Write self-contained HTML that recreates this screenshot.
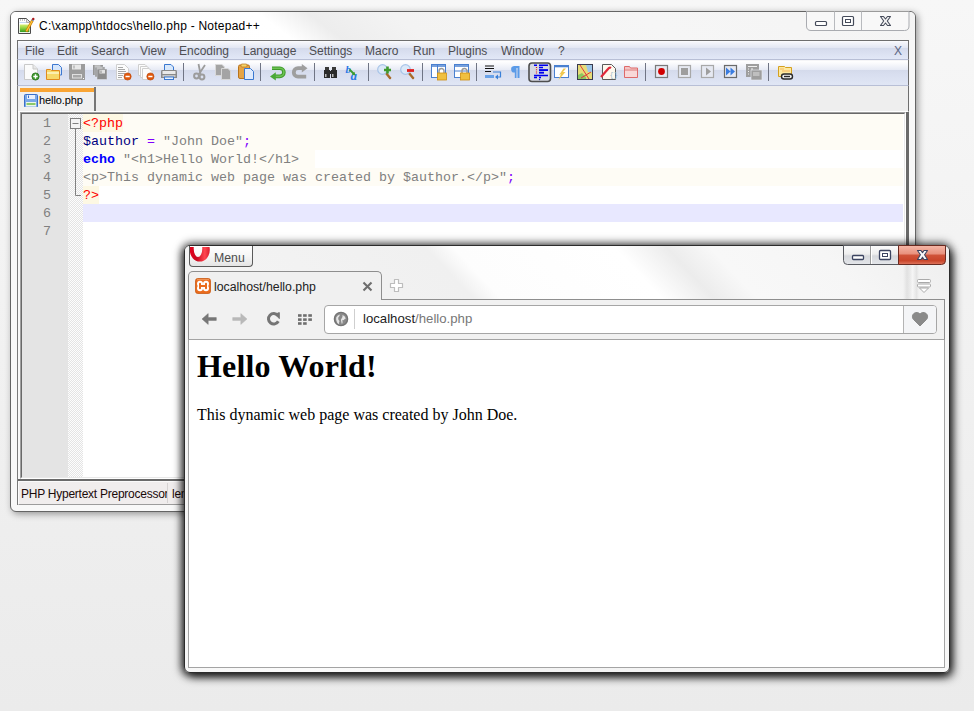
<!DOCTYPE html>
<html><head><meta charset="utf-8">
<style>
*{margin:0;padding:0;box-sizing:border-box}
html,body{width:974px;height:711px;overflow:hidden}
body{position:relative;background:linear-gradient(180deg,#f7f7f7 0%,#f1f1f1 50%,#ebebeb 100%);font-family:"Liberation Sans",sans-serif}
.a{position:absolute}
#npp{left:10px;top:11px;width:906px;height:501px;border:1px solid #646464;border-radius:6px;
 background:#f8f8f8;
 box-shadow:2px 2px 7px rgba(0,0,0,.38)}
.ttl{font-size:12px;color:#000;white-space:nowrap}
.menubar{border-top:1px solid #6e6e6e;border-left:1px solid #6e6e6e;border-right:1px solid #6e6e6e;background:linear-gradient(180deg,#fdfdfe 0px,#f4f5fa 1.5px,#e2e6f2 7px,#d4daeb 7px,#d8deef 10px,#e2e8f7 18px);border-bottom:1px solid #b8bfd6}
.menubar span{position:absolute;top:3px;font-size:12px;color:#4e4e52;white-space:nowrap}
.toolbar{border-left:1px solid #6e6e6e;border-right:1px solid #6e6e6e;background:linear-gradient(180deg,#f5f5f7 0px,#f5f5f7 1px,#ffffff 1px,#fbfbfd 3px,#e6eaf5 10px,#d4daeb 10px,#d8deef 14px,#e0e6f5 25px);border-bottom:1px solid #b8bfd6}
.tabbar{border-left:1px solid #6e6e6e;border-right:1px solid #6e6e6e;background:#eeeeee;border-bottom:1px solid #fff}
.code{font-family:"Liberation Mono",monospace;font-size:13.333px;line-height:18px;white-space:pre}
#op{left:184px;top:245px;width:766px;height:428px;border:1px solid #2c2c2c;border-radius:6px;
 background:linear-gradient(110deg,#f2f2f2 0%,#fbfbfb 30%,#f3f3f3 55%,#f7f7f7 100%);
 box-shadow:3px 4px 10px rgba(0,0,0,.8),-3px 2px 8px rgba(0,0,0,.6),0 -3px 8px rgba(0,0,0,.4)}
</style></head><body>
<!-- Notepad++ -->
<div id="npp" class="a"></div>
<div class="a" style="left:11px;top:12px;width:904px;height:28px;border-radius:5px 5px 0 0;background:linear-gradient(37deg,#fdfdfd 0px,#ffffff 170px,#ededed 200px,#f3f3f3 250px,#f6f6f6 400px,#f4f4f4 567px)"></div>
<div class="a ttl" style="left:39px;top:19px;letter-spacing:0.24px">C:\xampp\htdocs\hello.php - Notepad++</div>
<!-- menubar -->
<div class="a menubar" style="left:17px;top:40px;width:892px;height:20px">
  <span style="left:7px">File</span><span style="left:39px">Edit</span><span style="left:73px">Search</span><span style="left:122px">View</span><span style="left:161px">Encoding</span><span style="left:225px">Language</span><span style="left:291px">Settings</span><span style="left:347px">Macro</span><span style="left:395px">Run</span><span style="left:430px">Plugins</span><span style="left:483px">Window</span><span style="left:540px">?</span><span style="left:876px;color:#5b6582">X</span>
</div>
<div class="a toolbar" style="left:17px;top:60px;width:892px;height:26px"></div>
<div class="a tabbar" style="left:17px;top:86px;width:892px;height:26px"></div>
<!-- tab -->
<div class="a" style="left:19px;top:87px;width:77px;height:24px;background:#f0f0f0;border-right:2px solid #767676"></div>
<div class="a" style="left:20px;top:88px;width:74px;height:4px;background:#f9a535"></div>
<svg class="a" style="left:24px;top:94px" width="14" height="13" viewBox="0 0 14 13" preserveAspectRatio="none">
 <rect x="0.5" y="0.5" width="13" height="13" rx="1" fill="#7aa8e8" stroke="#3a6fc8"/>
 <rect x="3" y="1" width="8" height="4" fill="#e8f0fc"/>
 <rect x="4" y="1.5" width="1" height="2.5" fill="#3a6fc8"/>
 <rect x="2" y="8" width="10" height="4.5" fill="#eef6e8"/>
 <rect x="2.5" y="9" width="9" height="2" fill="#8ac86a"/>
</svg>
<div class="a" style="left:39px;top:94px;font-size:11px;color:#000;letter-spacing:-0.1px;white-space:nowrap">hello.php</div>
<!-- editor frame -->
<div class="a" style="left:20px;top:112px;width:886px;height:367px;border-top:1px solid #a0a0a0;border-left:1px solid #a0a0a0;border-right:1px solid #fff;border-bottom:1px solid #fff"></div>
<div class="a" style="left:21px;top:113px;width:884px;height:365px;border-top:1px solid #696969;border-left:1px solid #696969;border-right:1px solid #e8e8e8;border-bottom:1px solid #e8e8e8;background:#fff"></div>
<div class="a" style="left:906px;top:112px;width:3px;height:369px;background:#6a6a6a"></div>
<div class="a" style="left:17px;top:479px;width:892px;height:2px;background:#6a6a6a"></div>
<div class="a" style="left:17px;top:86px;width:1px;height:419px;background:#7a7a7a"></div>
<!-- line number margin -->
<div class="a" style="left:22px;top:114px;width:46px;height:363px;background:#e4e4e4"></div>
<div class="a" style="left:68px;top:114px;width:15px;height:363px;background:repeating-conic-gradient(#e4e4e4 0 25%,#fdfdfd 0 50%) 0 0/2px 2px"></div>
<!-- line backgrounds -->
<div class="a" style="left:83px;top:114px;width:40px;height:18px;background:#fdf8e3"></div>
<div class="a" style="left:123px;top:114px;width:780px;height:18px;background:#fefcf5"></div>
<div class="a" style="left:83px;top:132px;width:820px;height:36px;background:#fefcf5"></div>
<div class="a" style="left:83px;top:150px;width:232px;height:18px;background:#fefcf5"></div>
<div class="a" style="left:315px;top:150px;width:588px;height:18px;background:#fff"></div>
<div class="a" style="left:83px;top:168px;width:820px;height:18px;background:#fefcf5"></div>
<div class="a" style="left:83px;top:186px;width:16px;height:18px;background:#fdf8e3"></div>
<div class="a" style="left:83px;top:204px;width:820px;height:18px;background:#e8e8ff"></div>
<!-- line numbers -->
<div class="a code" style="left:27px;top:115px;width:24px;text-align:right;color:#808080">1
2
3
4
5
6
7</div>
<!-- fold marks -->
<svg class="a" style="left:68px;top:114px" width="15" height="100" viewBox="0 0 15 100">
 <rect x="2.5" y="4.5" width="10" height="10" fill="#f4f4f4" stroke="#808080"/>
 <path d="M4.5 9.5 H10.5" stroke="#808080"/>
 <path d="M7.5 15 V81.5 H13" fill="none" stroke="#808080"/>
</svg>
<!-- code -->
<div class="a code" style="left:83px;top:115px"><span style="color:#f00">&lt;?php</span>
<span style="color:#000080">$author</span> <span style="color:#8000ff">=</span> <span style="color:#808080">"John Doe"</span><span style="color:#8000ff">;</span>
<span style="color:#00f;font-weight:bold">echo</span> <span style="color:#808080">"&lt;h1&gt;Hello World!&lt;/h1&gt;</span>
<span style="color:#808080">&lt;p&gt;This dynamic web page was created by $author.&lt;/p&gt;"</span><span style="color:#8000ff">;</span>
<span style="color:#f00">?&gt;</span></div>
<!-- status bar -->
<div class="a" style="left:18px;top:481px;width:891px;height:24px;background:#f0eded;border-top:1px solid #fafafa;border-left:1px solid #fcfcfc;border-bottom:1px solid #9c9c9c"></div>
<div class="a" style="left:167px;top:483px;width:1px;height:20px;background:#d6d3d3"></div>
<div class="a" style="left:21px;top:487px;width:146px;overflow:hidden;font-size:12px;letter-spacing:-0.25px;color:#1a0a0a;white-space:nowrap">PHP Hypertext Preprocessor</div>
<div class="a" style="left:172px;top:487px;font-size:12px;letter-spacing:-0.25px;color:#1a0a0a;white-space:nowrap">length : 117</div>
<svg class="a" style="left:0;top:0" width="974" height="711" viewBox="0 0 974 711" shape-rendering="geometricPrecision">
<!-- title icon notepad -->
<defs><linearGradient id="ng" x1="0" y1="0" x2="0" y2="1"><stop offset="0" stop-color="#d8f070"/><stop offset="0.5" stop-color="#8ad040"/><stop offset="1" stop-color="#2e9a1e"/></linearGradient></defs>
<g transform="translate(18,18)">
 <path d="M0.5 0.5 H8.5 L12.5 4.5 V15.5 H0.5 Z" fill="#fff" stroke="#4a4a4a"/>
 <path d="M8.5 0.8 V4.5 H12.2" fill="#e4e4e4" stroke="#9a9a9a" stroke-width="0.8"/>
 <path d="M2 2 h1 M4 2 h1 M6 2 h1" stroke="#8a8a8a" stroke-width="1"/>
 <path d="M1.5 4.5 H8" stroke="#b8d0f0" stroke-width="0.8"/>
 <rect x="1.8" y="6.5" width="9.6" height="7.6" fill="url(#ng)"/>
 <path d="M8.3 13.6 L14.6 2.2" stroke="#c87800" stroke-width="2.6"/>
 <path d="M8.5 13.1 L14.4 2.5" stroke="#ffc83a" stroke-width="1.2"/>
 <path d="M14.3 2.6 L15.2 1" stroke="#6080c0" stroke-width="2.2"/>
 <circle cx="15.3" cy="0.9" r="1.2" fill="#b01818"/>
</g>
<!-- npp window buttons -->
<g>
 <path d="M806.5 11 V26 Q806.5 30.5 811 30.5 H904.5 Q909 30.5 909 26 V11" fill="rgba(255,255,255,0.35)" stroke="#a9abb0" stroke-width="1"/>
 <path d="M834.5 11.5 V30 M861.5 11.5 V30" stroke="#b8babe" stroke-width="1"/>
 <rect x="815.5" y="21.5" width="11" height="4" rx="1" fill="#fff" stroke="#454b5a" stroke-width="1.2"/>
 <rect x="842.5" y="16.5" width="11" height="9" rx="1" fill="#fff" stroke="#454b5a" stroke-width="1.2"/>
 <rect x="845.5" y="19.5" width="5" height="3" fill="#fff" stroke="#454b5a" stroke-width="1"/>
 <path d="M880.5 16.5 L883.5 16.5 L885.5 19 L887.5 16.5 L890.5 16.5 L887.3 21 L890.5 25.5 L887.5 25.5 L885.5 23 L883.5 25.5 L880.5 25.5 L883.7 21 Z" fill="#f4f4f4" stroke="#454b5a" stroke-width="1.1" stroke-linejoin="round"/>
</g>
<!-- toolbar separators -->
<g stroke="#6f7484" stroke-width="1">
 <path d="M183.5 63 V81 M260.5 63 V81 M314.5 63 V81 M368.5 63 V81 M422.5 63 V81 M476.5 63 V81 M645.5 63 V81 M768.5 63 V81"/>
</g>
<!-- 1 new -->
<g transform="translate(24,64)">
 <path d="M0.5 0.5 H9 L13.5 5 V15.5 H0.5 Z" fill="#fbfbfb" stroke="#c9c9c9"/>
 <path d="M9 0.5 V5 H13.5" fill="#e8e8e8" stroke="#c9c9c9"/>
 <circle cx="11.5" cy="12.5" r="3.6" fill="#3e9b2c" stroke="#2a6f1c" stroke-width="0.8"/>
 <path d="M11.5 10.3 V14.7 M9.3 12.5 H13.7" stroke="#fff" stroke-width="1.4"/>
</g>
<!-- 2 open -->
<g transform="translate(46,64)">
 <path d="M6.5 0.5 H12.5 L15.5 3.5 V11 H6.5 Z" fill="#d6e6fb" stroke="#3d78d0"/>
 <path d="M0.5 5.5 H4.5 L5.5 6.5 H13.5 V15.5 H0.5 Z" fill="#f6d86a" stroke="#e08a1e"/>
 <path d="M1 9 H13" stroke="#fbeeb0" stroke-width="2"/>
</g>
<!-- 3 save -->
<g transform="translate(69,64)">
 <path d="M0 0 H16 V16 H1 L0 15 Z" fill="#9c9c9c"/>
 <rect x="3" y="0.5" width="9" height="5" fill="#e8e8e8"/>
 <rect x="4.5" y="1.5" width="1" height="3" fill="#9c9c9c"/>
 <rect x="3" y="10" width="10" height="4.5" fill="#e0e0e0"/>
 <rect x="4" y="11" width="8" height="2.5" fill="#a8a8a8"/>
 <rect x="14" y="14" width="1" height="1" fill="#fff"/>
</g>
<!-- 4 save all -->
<g transform="translate(92,64)">
 <rect x="1" y="1" width="10" height="10" fill="#959595"/>
 <rect x="3" y="3" width="10" height="10" fill="#8f8f8f" stroke="#e4e7ef" stroke-width="0.5"/>
 <rect x="5" y="5" width="10" height="10.5" fill="#8c8c8c" stroke="#e4e7ef" stroke-width="0.5"/>
 <path d="M2.5 2 H8.5 M4.5 4 H10.5" stroke="#e6e6e6" stroke-width="0.9"/>
 <rect x="7.5" y="6" width="5.5" height="3.5" fill="#e2e2e2"/>
 <rect x="8.5" y="6.5" width="1" height="2.5" fill="#8c8c8c"/>
</g>
<!-- 5 close -->
<g transform="translate(116,64)">
 <path d="M0.5 0.5 H8.5 L12.5 4.5 V15.5 H0.5 Z" fill="#fcfcfc" stroke="#cfcfcf"/>
 <path d="M2 3.5 H7 M2 5.5 H9 M2 7.5 H10 M2 9.5 H9 M2 11.5 H7 M2 13.5 H6" stroke="#a8a8a8" stroke-width="1" shape-rendering="crispEdges"/>
 <circle cx="11.6" cy="12.5" r="3.6" fill="#e0580c" stroke="#b8440a" stroke-width="0.6"/>
 <path d="M9.5 12.5 H13.7" stroke="#fff" stroke-width="1.5"/>
</g>
<!-- 6 close all -->
<g transform="translate(138,64)">
 <path d="M0.5 0.5 H7 L10 3.5 V11.5 H0.5 Z" fill="#fcfcfc" stroke="#cfcfcf"/>
 <path d="M2.5 2.5 H9 L12 5.5 V13.5 H2.5 Z" fill="#fcfcfc" stroke="#cfcfcf"/>
 <path d="M4.5 4.5 H11 L14 7.5 V15.5 H4.5 Z" fill="#fcfcfc" stroke="#cfcfcf"/>
 <circle cx="12.4" cy="12.5" r="3.6" fill="#e0580c" stroke="#b8440a" stroke-width="0.6"/>
 <path d="M10.3 12.5 H14.5" stroke="#fff" stroke-width="1.5"/>
</g>
<!-- 7 print -->
<g transform="translate(161,64)">
 <path d="M3.5 0.5 H10 L12.5 3 V7 H3.5 Z" fill="#d8e8fb" stroke="#3a78d0"/>
 <path d="M1 6 H15 Q16 6 16 8 V14 H0 V8 Q0 6 1 6 Z" fill="#8a8a8a"/>
 <rect x="1.5" y="7" width="13" height="3" fill="#e9e9e9"/>
 <rect x="1.5" y="11" width="13" height="2" fill="#c5c5c5"/>
 <rect x="3.5" y="13" width="9" height="2.5" fill="#eaf2fc" stroke="#3a78d0"/>
</g>
<!-- 9 cut -->
<g transform="translate(193,64)" fill="none" stroke="#9c9c9c">
 <path d="M5.5 0 L7.5 10 M12 1 L6 10" stroke-width="1.8"/>
 <circle cx="3.5" cy="12" r="2.4" stroke-width="2"/>
 <circle cx="9" cy="13" r="2.4" stroke-width="2"/>
</g>
<!-- 10 copy -->
<g transform="translate(215,64)">
 <path d="M0.5 0.5 H7 L9.5 3 V11.5 H0.5 Z" fill="#a4a4a4" stroke="#d8d8d8"/>
 <path d="M6.5 4.5 H13 L15.5 7 V15.5 H6.5 Z" fill="#a4a4a4" stroke="#d8d8d8"/>
</g>
<!-- 11 paste -->
<g transform="translate(238,64)">
 <rect x="0.5" y="1" width="11" height="13.5" rx="1.5" fill="#e6a445" stroke="#b8731c"/>
 <rect x="3" y="0" width="6" height="3" rx="1" fill="#f5d46a" stroke="#b8731c" stroke-width="0.7"/>
 <path d="M6.5 4.5 H12.5 L15.5 7.5 V15.5 H6.5 Z" fill="#dfeafc" stroke="#3a78d0"/>
</g>
<!-- 13 undo -->
<g transform="translate(270,64)">
 <path d="M2 4.2 H9.8 A4.1 4.1 0 0 1 9.8 12.4 H4.5" fill="none" stroke="#3f9a2a" stroke-width="3.6"/>
 <path d="M2 4.2 H9.8 A4.1 4.1 0 0 1 9.8 12.4 H4.5" fill="none" stroke="#6cc254" stroke-width="1.6"/>
 <path d="M0 12.4 L5.8 8.2 V16.4 Z" fill="#4aa836"/>
</g>
<!-- 14 redo -->
<g transform="translate(292,64)">
 <path d="M14.2 12.6 H6 A4.2 4.2 0 0 1 6 4.2 H10.5" fill="none" stroke="#9e9e9e" stroke-width="3.8"/>
 <path d="M15.5 4.2 L9.8 0 V8.4 Z" fill="#9e9e9e"/>
</g>
<!-- 16 find -->
<g transform="translate(324,65)">
 <rect x="1" y="2" width="4" height="4" fill="#3a3a3a"/>
 <rect x="8" y="2" width="4" height="4" fill="#3a3a3a"/>
 <rect x="0" y="5" width="6" height="8" fill="#2b2b2b"/>
 <rect x="7" y="5" width="6" height="8" fill="#2b2b2b"/>
 <rect x="5" y="6" width="3" height="3" fill="#2b2b2b"/>
 <rect x="1" y="9" width="1.5" height="3" fill="#bbb"/>
 <rect x="8" y="9" width="1.5" height="3" fill="#bbb"/>
</g>
<!-- 17 replace -->
<g transform="translate(346,64)">
 <text x="-0.5" y="8.5" font-family="Liberation Serif" font-style="italic" font-weight="bold" font-size="11" fill="#2a78e4">b</text>
 <text x="4.5" y="16" font-family="Liberation Serif" font-style="italic" font-weight="bold" font-size="13" fill="#2a78e4">a</text>
 <path d="M3.5 5.5 L8 10" stroke="#3b9a2e" stroke-width="1.8"/>
 <path d="M9.5 11.5 L5.8 10.4 L8.4 7.8 Z" fill="#3b9a2e"/>
</g>
<!-- 19 zoom in -->
<g transform="translate(377,64)">
 <path d="M9 9 L13 14" stroke="#a86a2a" stroke-width="2.4" stroke-linecap="round"/>
 <circle cx="5.5" cy="5.5" r="4.8" fill="#dbe8f8" stroke="#a8c4e8" stroke-width="1.2"/>
 <path d="M10.5 2.5 V9.5 M7 6 H14" stroke="#3f9a2e" stroke-width="2.6"/>
</g>
<!-- 20 zoom out -->
<g transform="translate(400,64)">
 <path d="M9 9 L13 14" stroke="#a86a2a" stroke-width="2.4" stroke-linecap="round"/>
 <circle cx="5.5" cy="5.5" r="4.8" fill="#dbe8f8" stroke="#a8c4e8" stroke-width="1.2"/>
 <path d="M7 6.5 H14" stroke="#e02020" stroke-width="2.8"/>
</g>
<!-- 22 sync v -->
<g transform="translate(431,64)">
 <rect x="0.5" y="0.5" width="14" height="13" fill="#fff" stroke="#4a80d0"/>
 <path d="M0.5 2 H14.5" stroke="#4a80d0" stroke-width="1.5"/>
 <path d="M6.5 1 V13" stroke="#4a80d0"/>
 <path d="M8 9 V7 A2.5 2.5 0 0 1 13 7 V9" fill="none" stroke="#9a9a9a" stroke-width="1.5"/>
 <rect x="6.5" y="9" width="9" height="7" fill="#f0c040" stroke="#d09010" stroke-width="0.8"/>
</g>
<!-- 23 sync h -->
<g transform="translate(454,64)">
 <rect x="0.5" y="0.5" width="14" height="13" fill="#fff" stroke="#4a80d0"/>
 <path d="M0.5 2 H14.5" stroke="#4a80d0" stroke-width="1.5"/>
 <path d="M1 7 H14" stroke="#4a80d0"/>
 <path d="M8 9 V7 A2.5 2.5 0 0 1 13 7 V9" fill="none" stroke="#9a9a9a" stroke-width="1.5"/>
 <rect x="6.5" y="9" width="9" height="7" fill="#f0c040" stroke="#d09010" stroke-width="0.8"/>
</g>
<!-- 25 word wrap -->
<g transform="translate(485,64)">
 <path d="M0 2 H9 M0 4.5 H9 M0 7.5 H6" stroke="#111" stroke-width="1.2"/>
 <path d="M8 8 H15.5 V13 H12" fill="none" stroke="#3a80d8" stroke-width="1.2"/>
 <path d="M10 13 L13 10.5 V15.5 Z" fill="#3a80d8"/>
 <rect x="0" y="11" width="9" height="3" fill="#6aa2e8"/>
</g>
<!-- 26 pilcrow -->
<g transform="translate(511,66)">
 <path d="M3 0 H8.5 V12 H6.5 V2 H5.5 V12 H3.8 V6.5 A3.2 3.2 0 0 1 3 0 Z" fill="#5b9be8"/>
</g>
<!-- 27 pressed indent guide -->
<g>
 <rect x="529" y="63" width="21.5" height="18.5" rx="3" fill="#d6d9e2" stroke="#4e4e4e" stroke-width="1.6"/>
 <path d="M534 65.3 H537 M539 65.3 H548 M539 67.5 H543 M539 70 H548 M539 72.5 H544 M534 75.5 H548 M534 77.5 H537 M539 77.5 H541" stroke="#0000ee" stroke-width="1.4"/>
 <path d="M539 69.5 H548 V71 H539Z M539 72 H544 V73.5 H539Z" fill="#0000ee"/>
 <path d="M536.5 67 V74" stroke="#e02020" stroke-width="1.2" stroke-dasharray="1 1.2"/>
 <circle cx="539.5" cy="79.5" r="0.7" fill="#0000ee"/>
</g>
<!-- 28 UDL -->
<g transform="translate(554,65)">
 <rect x="0.5" y="0.5" width="14" height="12" fill="#fff" stroke="#4a80d0"/>
 <path d="M0.5 1.6 H14.5" stroke="#4a80d0" stroke-width="1.4"/>
 <path d="M5 10 L9.5 3.5 H12 L9 7 H11.5 L4.5 15 L7 9 Z" fill="#f0c850"/>
</g>
<!-- 29 doc map -->
<g transform="translate(577,64)">
 <rect x="0.5" y="0.5" width="15" height="15" fill="#e6dc78" stroke="#3a3a50"/>
 <path d="M9 1 H15 V8 H11 Z" fill="#9ec6e8"/>
 <path d="M1 11 L5 9 L9 13 L9 15 H1 Z" fill="#8cc860"/>
 <path d="M3 1 L12 15 M4 14 L14 8" stroke="#e03a3a" stroke-width="1"/>
</g>
<!-- 30 function list -->
<g transform="translate(601,64)">
 <path d="M1.5 0.5 H10.5 L14.5 4.5 V15.5 H1.5 Z" fill="#fdf8ee" stroke="#5a5a5a" stroke-width="1"/>
 <path d="M0 13 L7 5 Q8.5 3 10 4" stroke="#e0283a" stroke-width="2.2" fill="none"/>
 <text x="8.5" y="13" font-family="Liberation Mono" font-size="7" fill="#9bb8c8">{}</text>
</g>
<!-- 31 folder workspace -->
<g transform="translate(624,66)">
 <path d="M0.5 0.5 H5.5 L6.5 2 H13.5 V11.5 H0.5 Z" fill="#f4c4c4" stroke="#de6a6a"/>
 <path d="M1 4 H13" stroke="#e08a8a" stroke-width="1"/>
 <rect x="1" y="5" width="12" height="6" fill="#f8d8d8"/>
</g>
<!-- 33 record -->
<g transform="translate(655,65)">
 <rect x="0.5" y="0.5" width="12" height="12" fill="#e6e9f2" stroke="#7a7a7a" stroke-width="1.2"/>
 <circle cx="6.5" cy="6.5" r="3.4" fill="#d00000"/>
</g>
<!-- 34 stop -->
<g transform="translate(678,65)">
 <rect x="0.5" y="0.5" width="12" height="12" fill="#e6e9f2" stroke="#a8a8a8" stroke-width="1.2"/>
 <rect x="3" y="3" width="7" height="7" fill="#9e9e9e"/>
</g>
<!-- 35 play -->
<g transform="translate(701,65)">
 <rect x="0.5" y="0.5" width="12" height="12" fill="#e6e9f2" stroke="#a8a8a8" stroke-width="1.2"/>
 <path d="M5 2.5 L10 6.5 L5 10.5 Z" fill="#9e9e9e"/>
</g>
<!-- 36 run multi -->
<g transform="translate(724,65)">
 <rect x="0.5" y="0.5" width="12" height="12" fill="#e6e9f2" stroke="#6a6a6a" stroke-width="1.2"/>
 <path d="M2 2.5 L6.5 6.5 L2 10.5 Z M6.5 2.5 L11 6.5 L6.5 10.5 Z" fill="#3a7ce0"/>
</g>
<!-- 37 save macro -->
<g transform="translate(746,64)">
 <rect x="0" y="0" width="13" height="13" fill="#9e9e9e"/>
 <rect x="5" y="6" width="11" height="10" fill="#9e9e9e" stroke="#eceff6" stroke-width="0.6"/>
 <path d="M2 2.5 H11 M2 5 H3 M5 5 H7 M2 7.5 H3 M2 10 H3" stroke="#f0f0f0" stroke-width="1"/>
 <path d="M7 9 H13.5 M7 11 H13.5" stroke="#e8e8e8" stroke-width="0.9"/>
</g>
<!-- 39 folder chain -->
<g transform="translate(778,66)">
 <path d="M0.5 0.5 H6.5 L7.5 1.5 H13.5 V10.5 H0.5 Z" fill="#fde9a0" stroke="#d4a020"/>
 <path d="M2 3 H6 M4 5 H12" stroke="#f8b860" stroke-width="1.2"/>
 <rect x="3.5" y="8" width="11" height="5" rx="2.5" fill="#f0f0f0" stroke="#2a2a2a" stroke-width="1.4"/>
 <path d="M6 10.5 H12" stroke="#2a2a2a" stroke-width="1.4"/>
</g>
</svg>
<!-- Opera -->
<div id="op" class="a"></div>
<!-- glass streaks -->
<div class="a" style="left:185px;top:246px;width:764px;height:54px;border-radius:5px 5px 0 0;overflow:hidden;background:linear-gradient(47deg,#f4f4f4 0px,#f0f0f0 212px,#fdfdfd 232px,#ffffff 350px,#ececec 388px,#f8f8f8 420px,#f6f6f6 500px,#eeeeee 595px)"></div>
<div class="a" style="left:903px;top:246px;width:16px;height:53px;background:linear-gradient(90deg,rgba(0,0,0,0) 0%,rgba(0,0,0,.07) 25%,rgba(0,0,0,.03) 45%,rgba(255,255,255,.25) 60%,rgba(0,0,0,.06) 85%,rgba(0,0,0,0) 100%)"></div>
<!-- menu button -->
<div class="a" style="left:189px;top:246px;width:64px;height:21px;border:1px solid #5a5a5a;border-top:none;border-radius:0 0 4px 4px;background:linear-gradient(180deg,#ffffff 0%,#f6f6f6 50%,#e4e4e4 100%);overflow:hidden">
 <div class="a" style="left:0;top:0;width:62px;height:1px;background:#fff;z-index:2"></div>
 <svg class="a" style="left:-1px;top:0" width="24" height="20" viewBox="0 0 24 20">
  <defs><linearGradient id="og" x1="0" y1="0" x2="1" y2="0"><stop offset="0" stop-color="#e4001c"/><stop offset="0.35" stop-color="#c8081e"/><stop offset="0.75" stop-color="#ff4650"/><stop offset="1" stop-color="#d81c2c"/></linearGradient></defs>
  <path fill-rule="evenodd" fill="url(#og)" d="M0.8 3.8 A10 11.8 0 0 0 20.8 3.8 A10 11.8 0 0 0 0.8 3.8 Z M4.7 2.4 A4.3 8.6 0 0 0 13.3 2.4 A4.3 8.6 0 0 0 4.7 2.4 Z"/>
 </svg>
</div>
<div class="a" style="left:214px;top:251px;font-size:12.3px;color:#4d4d4d;white-space:nowrap">Menu</div>
<!-- window buttons -->
<svg class="a" style="left:842px;top:245px" width="106" height="21" viewBox="0 0 106 21">
 <defs>
  <linearGradient id="wb" x1="0" y1="0" x2="0" y2="1"><stop offset="0" stop-color="#fbfbfb"/><stop offset="0.45" stop-color="#eeeeee"/><stop offset="0.55" stop-color="#d6d8dc"/><stop offset="1" stop-color="#e4e6ea"/></linearGradient>
  <linearGradient id="cb" x1="0" y1="0" x2="0" y2="1"><stop offset="0" stop-color="#f6b8a8"/><stop offset="0.45" stop-color="#e8907c"/><stop offset="0.5" stop-color="#d0543a"/><stop offset="0.8" stop-color="#c9452a"/><stop offset="1" stop-color="#e07860"/></linearGradient>
 </defs>
 <path d="M1.5 0.5 V15.5 Q1.5 19.5 5.5 19.5 H56.5 V0.5 Z" fill="url(#wb)" stroke="#585a60"/>
 <path d="M56.5 0.5 V19.5 H99.5 Q103.5 19.5 103.5 15.5 V0.5 Z" fill="url(#cb)" stroke="#6a2a20"/>
 <path d="M29.5 1 V19" stroke="#ffffff" stroke-width="1"/><path d="M28.5 1 V19" stroke="#9a9a9a" stroke-width="1"/>
 <rect x="10.5" y="10.5" width="11" height="4" rx="1" fill="#fff" stroke="#3c4460" stroke-width="1.3"/>
 <rect x="37.5" y="5.5" width="11" height="9" rx="1" fill="#fff" stroke="#3c4460" stroke-width="1.3"/>
 <rect x="40.5" y="8.5" width="5" height="3" fill="#fff" stroke="#3c4460" stroke-width="1"/>
 <path d="M75.5 5.5 L79 5.5 L80.5 7.6 L82 5.5 L85.5 5.5 L82.6 9.8 L85.5 14.5 L82 14.5 L80.5 12.2 L79 14.5 L75.5 14.5 L78.4 9.8 Z" fill="#f8f8f8" stroke="#3c4460" stroke-width="1.1" stroke-linejoin="round"/>
</svg>
<!-- tab -->
<div class="a" style="left:188px;top:271px;width:194px;height:30px;border:1px solid #8e8e8e;border-bottom:none;border-radius:5px 5px 0 0;background:#f0f0f0"></div>
<svg class="a" style="left:195px;top:278px" width="16" height="16" viewBox="0 0 16 16">
 <rect x="0.5" y="0.5" width="15" height="15" rx="2.2" fill="#ea6b1c" stroke="#c95a14" stroke-width="0.8"/>
 <rect x="2" y="1.3" width="12" height="0.9" fill="#f6b080" opacity=".8"/>
 <g fill="#fff"><circle cx="5" cy="5.7" r="3"/><circle cx="5" cy="10.3" r="3"/><circle cx="11" cy="5.7" r="3"/><circle cx="11" cy="10.3" r="3"/><rect x="5" y="6.2" width="6" height="3.6"/></g>
 <path d="M5 5.8 V10.2 M11 5.8 V10.2 M5 8 H11" stroke="#ea6b1c" stroke-width="2" stroke-linecap="round"/>
</svg>
<div class="a" style="left:214px;top:280px;font-size:12.3px;color:#222;white-space:nowrap">localhost/hello.php</div>
<svg class="a" style="left:362px;top:281px" width="11" height="11" viewBox="0 0 11 11">
 <path d="M1.5 1.5 L9.5 9.5 M9.5 1.5 L1.5 9.5" stroke="#6e6e6e" stroke-width="2.1"/>
</svg>
<svg class="a" style="left:389px;top:278px" width="16" height="16" viewBox="0 0 16 16">
 <path d="M5.5 1.5 H9.5 V5.5 H13.5 V9.5 H9.5 V13.5 H5.5 V9.5 H1.5 V5.5 H5.5 Z" fill="#fff" stroke="#bdbdbd" stroke-width="1.2" stroke-linejoin="round"/>
</svg>
<!-- tab menu -->
<svg class="a" style="left:916px;top:278px" width="17" height="16" viewBox="0 0 17 16">
 <rect x="1.5" y="1.5" width="13" height="3" rx="1" fill="#fff" stroke="#aaa"/>
 <rect x="1.5" y="6" width="13" height="3" rx="1" fill="#fff" stroke="#aaa"/>
 <path d="M3.5 10 H12.5 L8 14.5 Z" fill="#fff" stroke="#aaa" stroke-linejoin="round"/>
</svg>
<!-- toolbar -->
<div class="a" style="left:381px;top:299px;width:564px;height:1px;background:#8e8e8e"></div>
<div class="a" style="left:188px;top:300px;width:757px;height:40px;background:#f1f1f1;border-left:1px solid #8e8e8e;border-right:1px solid #8e8e8e;border-bottom:1px solid #a4a4a4"></div>
<svg class="a" style="left:196px;top:306px" width="125" height="26" viewBox="0 0 125 26">
 <!-- back -->
 <path d="M6 13 L12.2 7.6 V11.6 H20.3 V14.4 H12.2 V18.4 Z" fill="#777" stroke="#777" stroke-width="0.5" stroke-linejoin="round"/>
 <!-- fwd -->
 <path d="M51 13 L44.8 7.6 V11.6 H36.7 V14.4 H44.8 V18.4 Z" fill="#b9b9b9" stroke="#b9b9b9" stroke-width="0.5" stroke-linejoin="round"/>
 <!-- reload -->
 <path d="M81.8 9.6 A5.2 5.2 0 1 0 82.3 15.2" fill="none" stroke="#757575" stroke-width="3"/>
 <path d="M79.2 8.2 L83.3 6.6 L83.3 12.6 Z" fill="#757575" stroke="#757575" stroke-width="1" stroke-linejoin="round"/>
 <!-- grid -->
 <g fill="#6e6e6e">
  <rect x="102" y="8.2" width="3.6" height="2.6"/><rect x="107.1" y="8.2" width="3.6" height="2.6"/><rect x="112.3" y="8.2" width="3.6" height="2.6"/>
  <rect x="102" y="12.3" width="3.6" height="2.6"/><rect x="107.1" y="12.3" width="3.6" height="2.6"/><rect x="112.3" y="12.3" width="3.6" height="2.6"/>
  <rect x="102" y="16.2" width="3.6" height="2.6"/><rect x="107.1" y="16.2" width="3.6" height="2.6"/>
 </g>
</svg>
<!-- address bar -->
<div class="a" style="left:324px;top:305px;width:613px;height:29px;border:1px solid #a6a6a6;border-radius:4px;background:#fff;overflow:hidden">
  <div class="a" style="left:578px;top:0;width:34px;height:27px;background:#f4f5f7;border-left:1px solid #b4b4b4"></div>
</div>
<svg class="a" style="left:333px;top:311px" width="16" height="16" viewBox="0 0 16 16">
 <circle cx="8" cy="8" r="6.6" fill="#8a8a8a" stroke="#747474" stroke-width="1.4"/>
 <path d="M3.2 6.5 Q4.5 4 7 3.6 Q6.5 5.5 5.2 6.8 Q5 9 6.5 10 Q5.5 12.5 6.3 13.6 Q3.6 12 3.2 9 Z M9.5 4 Q12 4.8 12.8 7.5 Q11.5 7.8 10.8 9.2 Q9.6 8.6 9.2 9.6 Q10.2 10.8 9 13.2 Q8.4 11.8 8.2 10.2 Q7.4 9 8.6 7.6 Q9.8 6.6 9.5 4 Z" fill="#e6e6e6"/>
</svg>
<div class="a" style="left:354px;top:309px;width:1px;height:20px;background:#cfcfcf"></div>
<div class="a" style="left:363px;top:311px;font-size:13.2px;color:#1c1c1c;white-space:nowrap">localhost<span style="color:#777">/hello.php</span></div>
<svg class="a" style="left:911px;top:311px" width="18" height="16" viewBox="0 0 18 16">
 <path d="M9 15 L2.3 8.3 A3.9 3.9 0 0 1 9 3.1 A3.9 3.9 0 0 1 15.7 8.3 Z" fill="#8a8a8a" stroke="#8a8a8a" stroke-width="1" stroke-linejoin="round"/>
</svg>
<!-- content -->
<div class="a" style="left:188px;top:340px;width:757px;height:328px;background:#fff;border-left:1px solid #a4a4a4;border-right:1px solid #a4a4a4;border-bottom:1px solid #a4a4a4"></div>
<div class="a" style="left:197px;top:348px;font-family:'Liberation Serif',serif;font-size:32px;font-weight:bold;color:#000;white-space:nowrap;letter-spacing:0.15px">Hello World!</div>
<div class="a" style="left:197px;top:406px;font-family:'Liberation Serif',serif;font-size:16px;color:#000;white-space:nowrap">This dynamic web page was created by John Doe.</div>

</body></html>
